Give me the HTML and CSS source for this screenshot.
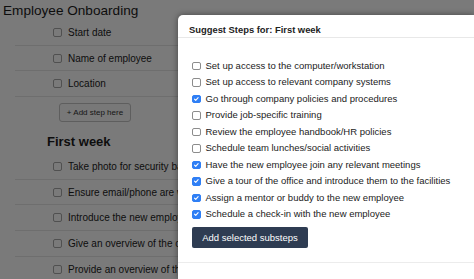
FILE: index.html
```html
<!DOCTYPE html>
<html>
<head>
<meta charset="utf-8">
<link rel="stylesheet" href="styles.css">
</head>
<body>
<div class="page">
  <h1 class="title">Employee Onboarding</h1>
  <ul class="steps">
    <li class="step"><span class="box"></span><span>Start date</span></li>
    <li class="step"><span class="box"></span><span>Name of employee</span></li>
    <li class="step"><span class="box"></span><span>Location</span></li>
  </ul>
  <button class="add-step">+ Add step here</button>
  <h2 class="section">First week</h2>
  <ul class="steps">
    <li class="step"><span class="box"></span><span>Take photo for security badge</span></li>
    <li class="step"><span class="box"></span><span>Ensure email/phone are working</span></li>
    <li class="step"><span class="box"></span><span>Introduce the new employee to the team</span></li>
    <li class="step"><span class="box"></span><span>Give an overview of the company</span></li>
    <li class="step"><span class="box"></span><span>Provide an overview of the role</span></li>
  </ul>
</div>
<div class="overlay"></div>
<div class="modal">
  <div class="modal-header">Suggest Steps for: First week</div>
  <div class="modal-body">
    <ul class="suggest">
      <li class="item"><span class="cb"></span><span>Set up access to the computer/workstation</span></li>
      <li class="item"><span class="cb"></span><span>Set up access to relevant company systems</span></li>
      <li class="item"><span class="cb on"><svg viewBox="0 0 10 10" width="8" height="8"><path d="M2.2 5.2 L4.2 7.2 L7.9 2.8" fill="none" stroke="#fff" stroke-width="1.6" stroke-linecap="round" stroke-linejoin="round"/></svg></span><span>Go through company policies and procedures</span></li>
      <li class="item"><span class="cb"></span><span>Provide job-specific training</span></li>
      <li class="item"><span class="cb"></span><span>Review the employee handbook/HR policies</span></li>
      <li class="item"><span class="cb"></span><span>Schedule team lunches/social activities</span></li>
      <li class="item"><span class="cb on"><svg viewBox="0 0 10 10" width="8" height="8"><path d="M2.2 5.2 L4.2 7.2 L7.9 2.8" fill="none" stroke="#fff" stroke-width="1.6" stroke-linecap="round" stroke-linejoin="round"/></svg></span><span>Have the new employee join any relevant meetings</span></li>
      <li class="item"><span class="cb on"><svg viewBox="0 0 10 10" width="8" height="8"><path d="M2.2 5.2 L4.2 7.2 L7.9 2.8" fill="none" stroke="#fff" stroke-width="1.6" stroke-linecap="round" stroke-linejoin="round"/></svg></span><span>Give a tour of the office and introduce them to the facilities</span></li>
      <li class="item"><span class="cb on"><svg viewBox="0 0 10 10" width="8" height="8"><path d="M2.2 5.2 L4.2 7.2 L7.9 2.8" fill="none" stroke="#fff" stroke-width="1.6" stroke-linecap="round" stroke-linejoin="round"/></svg></span><span>Assign a mentor or buddy to the new employee</span></li>
      <li class="item"><span class="cb on"><svg viewBox="0 0 10 10" width="8" height="8"><path d="M2.2 5.2 L4.2 7.2 L7.9 2.8" fill="none" stroke="#fff" stroke-width="1.6" stroke-linecap="round" stroke-linejoin="round"/></svg></span><span>Schedule a check-in with the new employee</span></li>
    </ul>
    <button class="primary">Add selected substeps</button>
  </div>
  <div class="modal-footer"></div>
</div>
</body>
</html>
```

FILE: styles.css
```css
html, body {
  margin: 0;
  padding: 0;
  width: 474px;
  height: 279px;
  overflow: hidden;
  background: #ffffff;
  font-family: "Liberation Sans", Arial, sans-serif;
  color: #1c1c1c;
}

.page {
  padding: 3px 0 0 0;
  width: 182px;
  height: 276px;
  overflow: hidden;
}

.title {
  margin: 0 0 1px 3px;
  font-size: 13.6px;
  font-weight: normal;
  line-height: 16px;
  white-space: nowrap;
}

.steps {
  list-style: none;
  margin: 0 0 0 15px;
  padding: 0;
}

.step {
  display: flex;
  align-items: center;
  gap: 6px;
  box-sizing: border-box;
  height: 25.7px;
  padding-left: 38px;
  border-bottom: 1px solid #e6e6e6;
  font-size: 10px;
  white-space: nowrap;
  overflow: hidden;
}

.box {
  width: 7px;
  height: 7px;
  border: 1px solid #a8a8a8;
  border-radius: 2px;
  background: #fff;
  flex: none;
}

.add-step {
  display: block;
  margin: 6px 0 0 59px;
  width: 72px;
  height: 19px;
  padding: 0;
  border: 1px solid #c4c4c4;
  border-radius: 3px;
  background: #fafafa;
  font-family: "Liberation Sans", Arial, sans-serif;
  font-size: 8px;
  color: #333;
}

.section {
  margin: 12px 0 4px 47px;
  font-size: 13px;
  font-weight: bold;
  line-height: 16px;
}

.overlay {
  position: absolute;
  inset: 0;
  background: rgba(0, 0, 0, 0.52);
}

.modal {
  position: absolute;
  left: 178px;
  top: 15px;
  right: 0;
  bottom: 0;
  overflow: hidden;
  background: #fff;
  border-radius: 5px 0 0 0;
  box-shadow: 0 0 6px rgba(0, 0, 0, 0.45);
  color: #222;
}

.modal-header {
  box-sizing: border-box;
  height: 23px;
  padding: 8.5px 0 0 11px;
  font-size: 9.4px;
  font-weight: bold;
  line-height: 11px;
  border-bottom: 1px solid #e8e8e8;
}

.modal-body {
  padding: 19.5px 0 14px 14px;
}

.suggest {
  list-style: none;
  margin: 0;
  padding: 0;
}

.item {
  display: flex;
  align-items: center;
  gap: 5px;
  height: 16.5px;
  font-size: 9.5px;
  line-height: 12px;
  white-space: nowrap;
}

.cb {
  box-sizing: border-box;
  width: 8.5px;
  height: 8.5px;
  border: 1px solid #8c8c8c;
  border-radius: 2px;
  background: #fff;
  flex: none;
  display: flex;
  align-items: center;
  justify-content: center;
}

.cb.on {
  border-color: #2f7ff5;
  background: #2f7ff5;
}

.cb svg {
  display: block;
}

.primary {
  display: block;
  margin-top: 4.5px;
  height: 21px;
  width: 116px;
  padding: 0;
  border: none;
  border-radius: 2px;
  background: #2e3c52;
  color: #fff;
  font-family: "Liberation Sans", Arial, sans-serif;
  font-size: 9.5px;
}

.modal-footer {
  border-top: 1px solid #ececec;
  height: 14px;
}
```
